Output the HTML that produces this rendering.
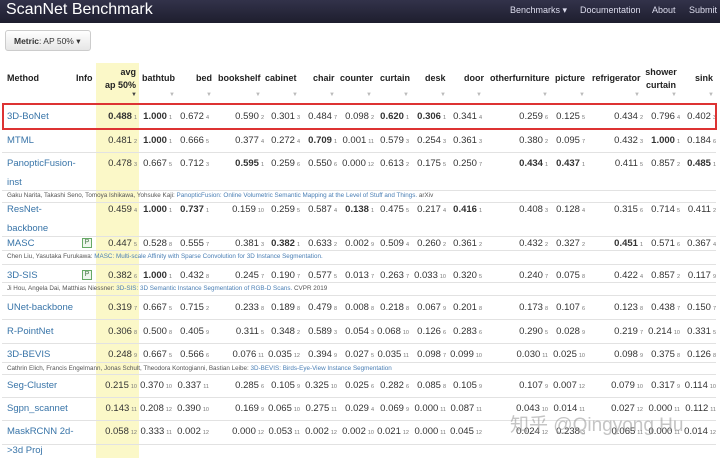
<!DOCTYPE html><html><head><meta charset="utf-8"><style>
*{margin:0;padding:0;box-sizing:border-box}
body{width:720px;height:458px;overflow:hidden;background:#fff;font-family:"Liberation Sans",Arial,sans-serif;color:#333;position:relative}
.nav{position:absolute;left:0;top:0;width:720px;height:23px;background:linear-gradient(#32324a,#1e1e2e)}
.nav .t{position:absolute;left:6px;top:1px;color:#fff;font-size:16px}
.nav span{position:absolute;top:5px;color:#dde;font-size:9px}
.btn{position:absolute;left:5px;top:30px;width:86px;height:21px;border:1px solid #ccc;border-radius:3px;background:linear-gradient(#fff,#e6e6e6);font-size:8.5px;padding:5px 0 0 8px;white-space:nowrap}
.hl{position:absolute;left:96px;top:63px;width:43px;height:395px;background:#fbf8c8}
.h{position:absolute;font-size:9px;font-weight:bold;line-height:13px;color:#222}
.ar{position:absolute;top:92px;font-size:6px;color:#bbb}
.ln{position:absolute;left:2px;width:714px;height:1px;background:#e2e2e2}
.r{position:absolute;left:0;width:720px;height:14px;font-size:9.5px}
.r i{position:absolute;font-style:normal;top:0;white-space:nowrap;text-align:right}
.r i s{text-decoration:none;font-size:5.5px;color:#777;margin-left:2px}
.r b{font-weight:bold}
.m{position:absolute;left:7px;color:#3874a8;font-size:9.5px;line-height:19px}
.a{position:absolute;left:7px;font-size:6.3px;color:#555;white-space:nowrap}
.a em{font-style:normal;color:#4a7fb5}
.p{position:absolute;left:82px;width:10px;height:10px;border:1px solid #6a6;background:#eef6ee;color:#474;font-size:7px;text-align:center;line-height:8px}
.c1{right:583px}.c2{right:548px}.c3{right:511px}.c4{right:456px}.c5{right:420px}.c6{right:383px}.c7{right:346px}.c8{right:311px}.c9{right:274px}.c10{right:238px}.c11{right:172px}.c12{right:135px}.c13{right:77px}.c14{right:40px}.c15{right:4px}
.box{position:absolute;left:2px;top:103px;width:715px;height:27px;border:2px solid #d33}
.wm{position:absolute;left:510px;top:410px;font-size:19px;color:rgba(150,150,150,.55);font-family:"Liberation Sans","Noto Sans CJK SC",sans-serif}
</style></head><body>
<div class="nav"><div class="t">ScanNet Benchmark</div><span style="left:510px">Benchmarks ▾</span><span style="left:580px">Documentation</span><span style="left:652px">About</span><span style="left:689px">Submit</span></div>
<div class="btn"><b>Metric</b>: AP 50% ▾</div>
<div class="hl"></div>
<div class="h" style="left:7px;top:72px">Method</div>
<div class="h" style="left:76px;top:72px">Info</div>
<div class="h" style="left:96px;width:40px;top:66px;text-align:right">avg<br>ap 50%</div>
<div class="h" style="left:142px;top:72px">bathtub</div>
<div class="h" style="left:196px;top:72px">bed</div>
<div class="h" style="left:218px;top:72px">bookshelf</div>
<div class="h" style="left:265px;top:72px">cabinet</div>
<div class="h" style="left:313px;top:72px">chair</div>
<div class="h" style="left:340px;top:72px">counter</div>
<div class="h" style="left:380px;top:72px">curtain</div>
<div class="h" style="left:425px;top:72px">desk</div>
<div class="h" style="left:464px;top:72px">door</div>
<div class="h" style="left:490px;top:72px">otherfurniture</div>
<div class="h" style="left:555px;top:72px">picture</div>
<div class="h" style="left:592px;top:72px">refrigerator</div>
<div class="h" style="left:643px;top:66px;text-align:center;width:36px">shower<br>curtain</div>
<div class="h" style="left:695px;top:72px">sink</div>
<div class="ar" style="left:131px;color:#444">▼</div><div class="ar" style="left:169px">▼</div><div class="ar" style="left:206px">▼</div><div class="ar" style="left:255px">▼</div><div class="ar" style="left:292px">▼</div><div class="ar" style="left:329px">▼</div><div class="ar" style="left:366px">▼</div><div class="ar" style="left:403px">▼</div><div class="ar" style="left:440px">▼</div><div class="ar" style="left:476px">▼</div><div class="ar" style="left:542px">▼</div><div class="ar" style="left:579px">▼</div><div class="ar" style="left:634px">▼</div><div class="ar" style="left:671px">▼</div><div class="ar" style="left:708px">▼</div>
<div class="ln" style="top:103px"></div><div class="ln" style="top:152px"></div><div class="ln" style="top:190px"></div><div class="ln" style="top:202px"></div><div class="ln" style="top:236px"></div><div class="ln" style="top:250px"></div><div class="ln" style="top:264px"></div><div class="ln" style="top:282px"></div><div class="ln" style="top:295px"></div><div class="ln" style="top:319px"></div><div class="ln" style="top:343px"></div><div class="ln" style="top:362px"></div><div class="ln" style="top:374px"></div><div class="ln" style="top:397px"></div><div class="ln" style="top:420px"></div><div class="ln" style="top:444px"></div>

<div class="m" style="top:107px">3D-BoNet</div>
<div class="r" style="top:111px"><i class="c1"><b>0.488</b><s>1</s></i><i class="c2"><b>1.000</b><s>1</s></i><i class="c3">0.672<s>4</s></i><i class="c4">0.590<s>2</s></i><i class="c5">0.301<s>3</s></i><i class="c6">0.484<s>7</s></i><i class="c7">0.098<s>2</s></i><i class="c8"><b>0.620</b><s>1</s></i><i class="c9"><b>0.306</b><s>1</s></i><i class="c10">0.341<s>4</s></i><i class="c11">0.259<s>6</s></i><i class="c12">0.125<s>5</s></i><i class="c13">0.434<s>2</s></i><i class="c14">0.796<s>4</s></i><i class="c15">0.402<s>3</s></i></div>
<div class="box"></div>

<div class="m" style="top:131px">MTML</div>
<div class="r" style="top:135px"><i class="c1">0.481<s>2</s></i><i class="c2"><b>1.000</b><s>1</s></i><i class="c3">0.666<s>5</s></i><i class="c4">0.377<s>4</s></i><i class="c5">0.272<s>4</s></i><i class="c6"><b>0.709</b><s>1</s></i><i class="c7">0.001<s>11</s></i><i class="c8">0.579<s>3</s></i><i class="c9">0.254<s>3</s></i><i class="c10">0.361<s>3</s></i><i class="c11">0.380<s>2</s></i><i class="c12">0.095<s>7</s></i><i class="c13">0.432<s>3</s></i><i class="c14"><b>1.000</b><s>1</s></i><i class="c15">0.184<s>6</s></i></div>

<div class="m" style="top:154px">PanopticFusion-<br>inst</div>
<div class="r" style="top:158px"><i class="c1">0.478<s>3</s></i><i class="c2">0.667<s>5</s></i><i class="c3">0.712<s>3</s></i><i class="c4"><b>0.595</b><s>1</s></i><i class="c5">0.259<s>6</s></i><i class="c6">0.550<s>6</s></i><i class="c7">0.000<s>12</s></i><i class="c8">0.613<s>2</s></i><i class="c9">0.175<s>5</s></i><i class="c10">0.250<s>7</s></i><i class="c11"><b>0.434</b><s>1</s></i><i class="c12"><b>0.437</b><s>1</s></i><i class="c13">0.411<s>5</s></i><i class="c14">0.857<s>2</s></i><i class="c15"><b>0.485</b><s>1</s></i></div>
<div class="a" style="top:192px">Gaku Narita, Takashi Seno, Tomoya Ishikawa, Yohsuke Kaji: <em>PanopticFusion: Online Volumetric Semantic Mapping at the Level of Stuff and Things.</em> arXiv</div>

<div class="m" style="top:200px">ResNet-<br>backbone</div>
<div class="r" style="top:204px"><i class="c1">0.459<s>4</s></i><i class="c2"><b>1.000</b><s>1</s></i><i class="c3"><b>0.737</b><s>1</s></i><i class="c4">0.159<s>10</s></i><i class="c5">0.259<s>5</s></i><i class="c6">0.587<s>4</s></i><i class="c7"><b>0.138</b><s>1</s></i><i class="c8">0.475<s>5</s></i><i class="c9">0.217<s>4</s></i><i class="c10"><b>0.416</b><s>1</s></i><i class="c11">0.408<s>3</s></i><i class="c12">0.128<s>4</s></i><i class="c13">0.315<s>6</s></i><i class="c14">0.714<s>5</s></i><i class="c15">0.411<s>2</s></i></div>

<div class="m" style="top:234px">MASC</div><div class="p" style="top:238px">P</div>
<div class="r" style="top:238px"><i class="c1">0.447<s>5</s></i><i class="c2">0.528<s>8</s></i><i class="c3">0.555<s>7</s></i><i class="c4">0.381<s>3</s></i><i class="c5"><b>0.382</b><s>1</s></i><i class="c6">0.633<s>2</s></i><i class="c7">0.002<s>9</s></i><i class="c8">0.509<s>4</s></i><i class="c9">0.260<s>2</s></i><i class="c10">0.361<s>2</s></i><i class="c11">0.432<s>2</s></i><i class="c12">0.327<s>2</s></i><i class="c13"><b>0.451</b><s>1</s></i><i class="c14">0.571<s>6</s></i><i class="c15">0.367<s>4</s></i></div>
<div class="a" style="top:253px">Chen Liu, Yasutaka Furukawa: <em>MASC: Multi-scale Affinity with Sparse Convolution for 3D Instance Segmentation.</em></div>

<div class="m" style="top:266px">3D-SIS</div><div class="p" style="top:270px">P</div>
<div class="r" style="top:270px"><i class="c1">0.382<s>6</s></i><i class="c2"><b>1.000</b><s>1</s></i><i class="c3">0.432<s>8</s></i><i class="c4">0.245<s>7</s></i><i class="c5">0.190<s>7</s></i><i class="c6">0.577<s>5</s></i><i class="c7">0.013<s>7</s></i><i class="c8">0.263<s>7</s></i><i class="c9">0.033<s>10</s></i><i class="c10">0.320<s>5</s></i><i class="c11">0.240<s>7</s></i><i class="c12">0.075<s>8</s></i><i class="c13">0.422<s>4</s></i><i class="c14">0.857<s>2</s></i><i class="c15">0.117<s>9</s></i></div>
<div class="a" style="top:285px">Ji Hou, Angela Dai, Matthias Niessner: <em>3D-SIS: 3D Semantic Instance Segmentation of RGB-D Scans.</em> CVPR 2019</div>

<div class="m" style="top:298px">UNet-backbone</div>
<div class="r" style="top:302px"><i class="c1">0.319<s>7</s></i><i class="c2">0.667<s>5</s></i><i class="c3">0.715<s>2</s></i><i class="c4">0.233<s>8</s></i><i class="c5">0.189<s>8</s></i><i class="c6">0.479<s>8</s></i><i class="c7">0.008<s>8</s></i><i class="c8">0.218<s>8</s></i><i class="c9">0.067<s>9</s></i><i class="c10">0.201<s>8</s></i><i class="c11">0.173<s>8</s></i><i class="c12">0.107<s>6</s></i><i class="c13">0.123<s>8</s></i><i class="c14">0.438<s>7</s></i><i class="c15">0.150<s>7</s></i></div>

<div class="m" style="top:322px">R-PointNet</div>
<div class="r" style="top:326px"><i class="c1">0.306<s>8</s></i><i class="c2">0.500<s>8</s></i><i class="c3">0.405<s>9</s></i><i class="c4">0.311<s>5</s></i><i class="c5">0.348<s>2</s></i><i class="c6">0.589<s>3</s></i><i class="c7">0.054<s>3</s></i><i class="c8">0.068<s>10</s></i><i class="c9">0.126<s>6</s></i><i class="c10">0.283<s>6</s></i><i class="c11">0.290<s>5</s></i><i class="c12">0.028<s>9</s></i><i class="c13">0.219<s>7</s></i><i class="c14">0.214<s>10</s></i><i class="c15">0.331<s>5</s></i></div>

<div class="m" style="top:345px">3D-BEVIS</div>
<div class="r" style="top:349px"><i class="c1">0.248<s>9</s></i><i class="c2">0.667<s>5</s></i><i class="c3">0.566<s>6</s></i><i class="c4">0.076<s>11</s></i><i class="c5">0.035<s>12</s></i><i class="c6">0.394<s>9</s></i><i class="c7">0.027<s>5</s></i><i class="c8">0.035<s>11</s></i><i class="c9">0.098<s>7</s></i><i class="c10">0.099<s>10</s></i><i class="c11">0.030<s>11</s></i><i class="c12">0.025<s>10</s></i><i class="c13">0.098<s>9</s></i><i class="c14">0.375<s>8</s></i><i class="c15">0.126<s>8</s></i></div>
<div class="a" style="top:365px">Cathrin Elich, Francis Engelmann, Jonas Schult, Theodora Kontogianni, Bastian Leibe: <em>3D-BEVIS: Birds-Eye-View Instance Segmentation</em></div>

<div class="m" style="top:376px">Seg-Cluster</div>
<div class="r" style="top:380px"><i class="c1">0.215<s>10</s></i><i class="c2">0.370<s>10</s></i><i class="c3">0.337<s>11</s></i><i class="c4">0.285<s>6</s></i><i class="c5">0.105<s>9</s></i><i class="c6">0.325<s>10</s></i><i class="c7">0.025<s>6</s></i><i class="c8">0.282<s>6</s></i><i class="c9">0.085<s>8</s></i><i class="c10">0.105<s>9</s></i><i class="c11">0.107<s>9</s></i><i class="c12">0.007<s>12</s></i><i class="c13">0.079<s>10</s></i><i class="c14">0.317<s>9</s></i><i class="c15">0.114<s>10</s></i></div>

<div class="m" style="top:399px">Sgpn_scannet</div>
<div class="r" style="top:403px"><i class="c1">0.143<s>11</s></i><i class="c2">0.208<s>12</s></i><i class="c3">0.390<s>10</s></i><i class="c4">0.169<s>9</s></i><i class="c5">0.065<s>10</s></i><i class="c6">0.275<s>11</s></i><i class="c7">0.029<s>4</s></i><i class="c8">0.069<s>9</s></i><i class="c9">0.000<s>11</s></i><i class="c10">0.087<s>11</s></i><i class="c11">0.043<s>10</s></i><i class="c12">0.014<s>11</s></i><i class="c13">0.027<s>12</s></i><i class="c14">0.000<s>11</s></i><i class="c15">0.112<s>11</s></i></div>

<div class="m" style="top:422px">MaskRCNN 2d-<br>&gt;3d Proj</div>
<div class="r" style="top:426px"><i class="c1">0.058<s>12</s></i><i class="c2">0.333<s>11</s></i><i class="c3">0.002<s>12</s></i><i class="c4">0.000<s>12</s></i><i class="c5">0.053<s>11</s></i><i class="c6">0.002<s>12</s></i><i class="c7">0.002<s>10</s></i><i class="c8">0.021<s>12</s></i><i class="c9">0.000<s>11</s></i><i class="c10">0.045<s>12</s></i><i class="c11">0.024<s>12</s></i><i class="c12">0.238<s>3</s></i><i class="c13">0.065<s>11</s></i><i class="c14">0.000<s>11</s></i><i class="c15">0.014<s>12</s></i></div>
<div class="wm">知乎 @Qingyong Hu</div>
</body></html>
